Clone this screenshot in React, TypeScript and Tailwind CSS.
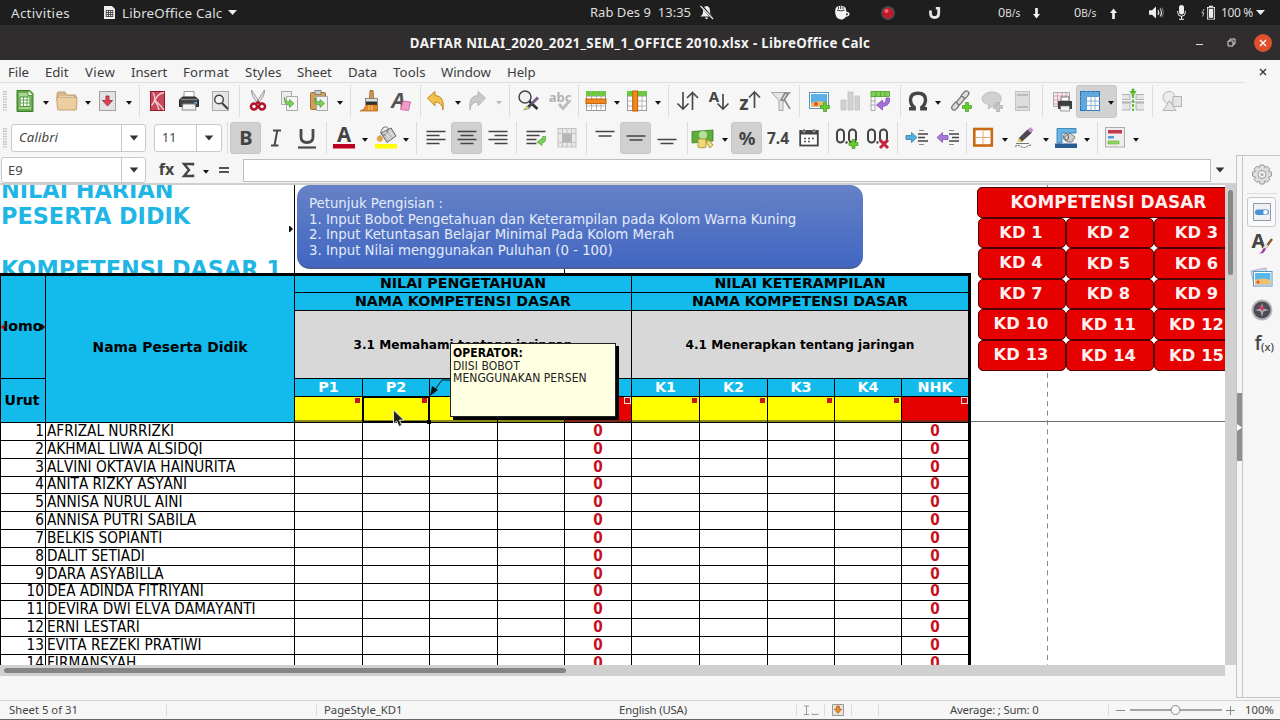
import type { ReactNode } from "react";

type IconProps = { m?: string; children: ReactNode };

const Icon = ({ m = "", children }: IconProps) => (
  <svg className={`h-[22px] w-[22px] shrink-0 overflow-visible ${m}`} viewBox="0 0 22 22" fill="none">
    {children}
  </svg>
);

const Arrow = ({ m = "", faded = false }: { m?: string; faded?: boolean }) => (
  <svg className={`mt-1 h-[6px] w-[8px] shrink-0 ${m}`} viewBox="0 0 8 6">
    <path d="M1 1h6L4 4.8z" fill={faded ? "#bdbdbd" : "#111"} />
  </svg>
);

const Sep = ({ m }: { m: string }) => <div className={`h-8 w-px shrink-0 bg-[#dcdcdc] ${m}`} />;

const Grip = () => (
  <svg className="ml-[3px] h-[22px] w-1 shrink-0" viewBox="0 0 4 22">
    <path d="M.8 1v20M3 1v20" stroke="#aaa" strokeWidth="1.2" strokeDasharray="1.4 1.2" />
  </svg>
);

const Toggled = ({ m, children }: IconProps) => (
  <div className={`flex h-8 w-[31px] shrink-0 items-center justify-center rounded-[3px] border border-[#c6c6c6] bg-[#d0d0d0] ${m}`}>
    {children}
  </div>
);

const DownBig = ({ m = "" }: { m?: string }) => (
  <svg className={`h-[6px] w-[10px] shrink-0 ${m}`} viewBox="0 0 10 6">
    <path d="M.7.6h8.6L5 5.4z" fill="#333" />
  </svg>
);

const Letter = ({ x, y, s, w = 700, c = "#444", italic = false, anchor = "middle", children }: {
  x: number; y: number; s: number; w?: number; c?: string; italic?: boolean;
  anchor?: "start" | "middle"; children: ReactNode;
}) => (
  <text
    x={x} y={y} fontSize={s} fontWeight={w} fill={c} textAnchor={anchor}
    fontStyle={italic ? "italic" : "normal"}
    className="font-['Noto_Sans',sans-serif]"
  >
    {children}
  </text>
);

const Gridlet = ({ band }: { band: "row" | "col" }) => (
  <>
    <rect x="1.5" y="1.5" width="19" height="19" fill="#fff" stroke="#9a9a9a" />
    <rect x="1" y="1" width="20" height="5" fill="#66cc33" />
    <path d="M6.5 1v20M11.5 1v20M16 1v20M1 6.3h20M1 11h20M1 16h20" stroke="#a5a5a5" strokeWidth=".8" />
    {band === "row" ? (
      <rect x="1" y="9" width="20" height="4.6" fill="#ee8a22" stroke="#c65f00" />
    ) : (
      <rect x="6.8" y="1" width="4.8" height="20" fill="#ee8a22" stroke="#c65f00" />
    )}
  </>
);

const Plus = ({ x, y, c = "#66cc33" }: { x: number; y: number; c?: string }) => (
  <path
    d={`M${x - 1.5} ${y - 4.5}h3v3h3v3h-3v3h-3v-3h-3v-3h3z`}
    fill={c} stroke={c === "#66cc33" ? "#3f9a18" : "#aaa"} strokeWidth=".7"
  />
);

function TopBar() {
  return (
    <div className="flex h-[25px] shrink-0 items-center bg-[#1e1e1e] text-[13.400px] text-[#dedede]">
      <div className="w-[92px] pl-[11px] pt-px tracking-[0.320px]">Activities</div>
      <div className="flex w-[497px] items-center">
        <svg className="ml-3 h-[13px] w-[11px]" viewBox="0 0 11 13">
          <path d="M0 0h8l3 3v10H0z" fill="#eee" />
          <path d="M2 4.5h7M2 6.5h7M2 8.5h7M2 10.500h7M2.300 4v7M4.500 4v7M6.600 4v7M8.800 4v7" stroke="#333" strokeWidth=".8" />
        </svg>
        <span className="ml-[7px] w-[101px] whitespace-nowrap pt-px tracking-[0.150px]">LibreOffice Calc</span>
        <svg className="ml-[5px] h-[5px] w-[9px]" viewBox="0 0 9 5"><path d="M0 0h9L4.500 5z" fill="#eee" /></svg>
      </div>
      <div className="flex w-[245px] items-center">
        <span className="w-[110px] whitespace-pre pl-px pt-px text-[13px] tracking-[0.030px]">Rab Des 9  13:35</span>
        <svg className="h-[15px] w-[15px]" viewBox="0 0 15 15">
          <path d="M7.500 1C4.500 1.500 4 4 4 6.500S3 10 1.500 11.500h12C12 10 11 9 11 6.500S10.500 1.500 7.500 1zM6 12.500a1.500 1.500 0 0 0 3 0z" fill="#eee" />
          <path d="M2 .5 14 14" stroke="#1e1e1e" strokeWidth="2.600" />
          <path d="M1.500 1 14 14" stroke="#eee" strokeWidth="1.200" />
        </svg>
      </div>
      <svg className="h-[15px] w-[16px]" viewBox="0 0 16 15">
        <path d="M1 5.500h11.500V7q3-.5 3 1.700 0 2.800-3.700 3-1.300 2.800-5 2.800Q1 14 1 5.500z" fill="#f5f5f5" />
        <path d="M12.300 8.200q1.700-.3 1.700.7 0 1.200-1.900 1.500z" fill="#1e1e1e" />
        <ellipse cx="6.700" cy="4.500" rx="5.300" ry="3.800" fill="#f5f5f5" />
        <path d="M3 5q3.700 1.800 7.500 0M4.500 1.500v2.500M6.700 1v3M9 1.500v2.500" stroke="#1e1e1e" strokeWidth=".9" fill="none" />
      </svg>
      <svg className="ml-[30px] h-4 w-4" viewBox="0 0 16 16">
        <circle cx="8" cy="8" r="7" fill="#4b4b4b" /><circle cx="8" cy="8" r="5.300" fill="#c9152b" />
        <circle cx="6.500" cy="6" r="2" fill="#ee6a78" />
      </svg>
      <svg className="ml-[32px] h-[14px] w-[14px]" viewBox="0 0 14 14">
        <path d="M2.500 4.500v3q.3 4 4 4 4.200 0 4.200-4.500V3" fill="none" stroke="#e6e6e6" strokeWidth="2.800" /><path d="M7.800 1h4.300v2.500H7.800z" fill="#e6e6e6" />
      </svg>
      <span className="ml-[56px] w-[34px] whitespace-nowrap pt-0.5 text-[12.600px]">0<span className="text-[10px]">B/s</span></span>
      <svg className="mt-0.5 h-[11px] w-[9px]" viewBox="0 0 9 11"><path d="M3.200 0h2.600v6H8L4.500 10.500 1 6h2.200z" fill="#f5f5f5" /></svg>
      <span className="ml-[33px] w-[34px] whitespace-nowrap pt-0.5 text-[12.600px]">0<span className="text-[10px]">B/s</span></span>
      <svg className="ml-[1px] mt-0.5 h-[11px] w-[9px]" viewBox="0 0 9 11"><path d="M3.200 11h2.600V5H8L4.500.5 1 5h2.200z" fill="#f5f5f5" /></svg>
      <svg className="ml-[31px] h-[13px] w-[15px]" viewBox="0 0 15 13">
        <path d="M0 4.200h3L7 .5v12L3 8.800H0z" fill="#eee" />
        <path d="M9 4q1.500 2.500 0 5M11 2.500q3 4 0 8" stroke="#ddd" fill="none" strokeWidth="1.200" />
        <path d="M13 1.500q3 5 0 10" stroke="#777" fill="none" />
      </svg>
      <svg className="ml-[13px] h-[15px] w-[9px]" viewBox="0 0 9 15">
        <rect x="2" y="0" width="5" height="9.500" rx="2.500" fill="#eee" />
        <path d="M.7 6v1.500a3.800 3.800 0 0 0 7.600 0V6M4.500 11v3M2 14.300h5" stroke="#eee" fill="none" />
      </svg>
      <svg className="ml-[15px] h-[15px] w-[15px]" viewBox="0 0 15 15">
        <path d="M3 4 1 8h2L1.500 11.500" stroke="#bbb" fill="none" />
        <path d="M6 2h2V.7h4V2h2v12.500H6z" fill="#eee" /><path d="M7.300 3.300h5.400v10H7.300z" fill="none" stroke="#1e1e1e" />
      </svg>
      <span className="ml-[5px] w-[35px] whitespace-nowrap pt-px text-[12px] tracking-[-0.350px]">100 %</span>
      <svg className="h-[5px] w-[9px]" viewBox="0 0 9 5"><path d="M0 0h9L4.500 5z" fill="#eee" /></svg>
    </div>
  );
}

function TitleBar() {
  return (
    <div className="grid h-[35px] shrink-0 grid-cols-[90px_1100px_90px] items-center bg-[#302d2e]">
      <div />
      <div className="pt-0.5 text-center text-[13.300px] font-bold tracking-[0.320px] text-[#f3f3f3]">
        DAFTAR NILAI_2020_2021_SEM_1_OFFICE 2010.xlsx - LibreOffice Calc
      </div>
      <div className="flex items-center">
        <div className="ml-[6px] mt-1 h-px w-[7px] bg-[#ddd]" />
        <svg className="ml-[24px] h-[9px] w-[9px]" viewBox="0 0 9 9">
          <path d="M1 3h5v5H1zM3 3V1h5v5H6" fill="none" stroke="#ddd" />
        </svg>
        <svg className="ml-[18px] h-[18px] w-[18px]" viewBox="0 0 18 18">
          <circle cx="9" cy="9" r="9" fill="#e0502a" /><path d="m6 6 6 6M12 6l-6 6" stroke="#fff" strokeWidth="1.400" />
        </svg>
      </div>
    </div>
  );
}

function MenuBar() {
  return (
    <div className="flex h-[23px] shrink-0 items-center">
      <div className="flex h-full w-[1245px] items-center border-b border-[#e0e0e0] pl-[8px] pt-[3px] text-[13.200px] tracking-[-0.050px] text-[#3c3c3c]">
        <span className="w-[37px]">File</span>
        <span className="w-[40px]">Edit</span>
        <span className="w-[46px] tracking-[0.300px]">View</span>
        <span className="w-[52px]">Insert</span>
        <span className="w-[62px] tracking-[0.200px]">Format</span>
        <span className="w-[52px] tracking-[0.150px]">Styles</span>
        <span className="w-[51px]">Sheet</span>
        <span className="w-[45px]">Data</span>
        <span className="w-[48px] tracking-[0.150px]">Tools</span>
        <span className="w-[66px]">Window</span>
        <span>Help</span>
      </div>
      <svg className="ml-[14px] h-[8px] w-[8px]" viewBox="0 0 8 8"><path d="m1 1 6 6M7 1 1 7" stroke="#333" strokeWidth="1.300" /></svg>
    </div>
  );
}

function StandardToolbar() {
  return (
    <div className="flex h-[37px] shrink-0 items-center pb-px">
      <Grip />
      <Icon m="ml-[7px]">
        <path d="M3 .5h13l3 3v18H3z" fill="#66aa4c" stroke="#3d7d2c" /><path d="M5 3h12v16H5z" fill="#a9d695" />
        <rect x="6" y="7" width="10" height="9.500" fill="#fff" stroke="#4b9433" /><path d="M6 10h10M6 13h10M9.500 7v9.500M13 7v9.500" stroke="#4b9433" strokeWidth=".8" />
        <path d="M14 .5v5h5" fill="#e9f6e4" stroke="#3d7d2c" strokeWidth=".7" />
      </Icon>
      <Arrow m="ml-[6px]" />
      <Icon m="ml-[6px]">
        <path d="M1 4q0-2 2-2h6l2 3h8q1 0 1 1v4H1z" fill="#d8b98c" stroke="#b6935f" strokeWidth=".8" />
        <path d="M3 6h15v5H3z" fill="#fafafa" /><path d="M.7 8q0-1 1-1H20q1 0 1 1l-.5 11q0 1-1 1H2.500q-1 0-1-1z" fill="#ecce9f" stroke="#b6935f" strokeWidth=".8" />
      </Icon>
      <Arrow m="ml-[6px]" />
      <Icon m="ml-[5px]">
        <rect x="2.500" y="1.500" width="16" height="19" fill="#e3e3e3" stroke="#a2a2a2" />
        <path d="M9 6h3v4.500h3.500L10.500 16l-5-5.500H9z" fill="#dd4455" stroke="#a21e30" strokeWidth=".8" />
      </Icon>
      <Arrow m="ml-[6px]" />
      <Sep m="ml-[6px]" />
      <Icon m="ml-[7px]">
        <rect x="3.500" y="1.500" width="14" height="19" fill="#c9495c" stroke="#96172c" />
        <path d="M17 2.500q-7 1.500-9 8 4 3 9 9.500" stroke="#f3d5d9" strokeWidth="1.300" /><path d="M6 2.500q2.500 4 1.500 8-1 3-3 5" stroke="#f3d5d9" strokeWidth="1.300" /><path d="M8 11q3 4 4 9" stroke="#f3d5d9" strokeWidth="1.300" />
      </Icon>
      <Icon m="ml-[9px]">
        <path d="M6 1.500h10v7H6z" fill="#fff" stroke="#999" /><path d="M1.500 10l3-3h13l3 3v6.500h-19z" fill="#454545" stroke="#222" />
        <path d="M3 9.500h16" stroke="#888" /><path d="M5 14h12l1 6H4z" fill="#f5f5f5" stroke="#888" /><rect x="16.500" y="12" width="2.500" height="1.500" fill="#5bc4e8" />
      </Icon>
      <Icon m="ml-[9px]">
        <rect x="3.500" y="1.500" width="16" height="19" fill="#e6e6e6" stroke="#aaa" />
        <circle cx="10" cy="9.500" r="4.300" fill="#f7f7f7" stroke="#444" strokeWidth="1.400" /><path d="m13 13 6 6" stroke="#444" strokeWidth="2.200" />
      </Icon>
      <Sep m="ml-[8px]" />
      <Icon m="ml-[7px]">
        <path d="M4.500 0q-.5 6 6 13l1.500-1.500zM17.500 0q.5 6-6 13L10 11.500z" fill="#e0e0e0" stroke="#888" strokeWidth=".8" />
        <circle cx="7" cy="16.500" r="3" stroke="#b0112b" strokeWidth="2.500" /><circle cx="15" cy="16.500" r="3" stroke="#b0112b" strokeWidth="2.500" />
        <path d="m9 14 2-2 2 2" stroke="#b0112b" strokeWidth="2" />
      </Icon>
      <Icon m="ml-[9px]">
        <path d="M3.500 1.500h10v13h-10z" fill="#eee" stroke="#a9a9a9" /><path d="M8.500 6.500h11v14h-11z" fill="#f5f5f5" stroke="#a9a9a9" />
        <path d="M6.500 7q0 5 5 5V9.500l4.500 4-4.500 4V15Q5.500 15 6.500 7z" fill="#7bd05c" stroke="#439a25" strokeWidth=".7" />
      </Icon>
      <Icon m="ml-[8px]">
        <rect x="2.500" y="2.500" width="15" height="17" rx="1" fill="#cf9f60" stroke="#9d7030" /><rect x="7" y=".5" width="6" height="4" fill="#ccc" stroke="#777" strokeWidth=".8" />
        <path d="M8.500 6.500h11v14h-11z" fill="#f1f1f1" stroke="#a9a9a9" />
        <path d="M7 8q0 4 5 4V9.500l4.500 4-4.500 4V15Q5.500 15 7 8z" fill="#7bd05c" stroke="#439a25" strokeWidth=".7" />
      </Icon>
      <Arrow m="ml-[6px]" />
      <Sep m="ml-[6px]" />
      <Icon m="ml-[8px]">
        <path d="M11 .5h3l.5 8h-4z" fill="#d59a56" stroke="#8f5c22" strokeWidth=".8" /><rect x="6.500" y="8.500" width="12" height="3" fill="#e0e0e0" stroke="#777" strokeWidth=".8" />
        <path d="M6.500 12h12v3h-12z" fill="#333" /><path d="M7 15h11.500v6H1q5-1 6-6z" fill="#e38a2a" stroke="#a85d10" strokeWidth=".7" /><path d="M10 15v5M13 15v5" stroke="#ffd08a" />
      </Icon>
      <Icon m="ml-[9px]">
        <Letter x={8.5} y={18} s={22} italic c="#555">A</Letter>
        <path d="m13 11 7.500 1-2 8.500-8-1z" fill="#f09ccb" stroke="#c45a97" strokeWidth=".8" />
      </Icon>
      <Sep m="ml-[8px]" />
      <Icon m="ml-[4px]">
        <path d="M2.500 8 10 1.500V5.500q10 0 8 14.500-1-8-8-8v4z" fill="#f3c04c" stroke="#b98319" strokeWidth=".9" />
      </Icon>
      <Arrow m="ml-[7px]" />
      <Icon m="ml-[4px]">
        <path d="M19.500 8 12 1.500V5.500q-10 0-8 14.500 1-8 8-8v4z" fill="#c9c9c9" stroke="#b3b3b3" strokeWidth=".9" />
      </Icon>
      <Arrow m="ml-[7px]" faded />
      <Sep m="ml-[6px]" />
      <Icon m="ml-[8px]">
        <circle cx="7" cy="7" r="6" fill="#f1f1f1" stroke="#444" strokeWidth="1.500" /><path d="m11.500 11.500 8 7.500" stroke="#333" strokeWidth="2.800" />
        <path d="m12 15.500 8-8" stroke="#7b5a8e" strokeWidth="3" /><path d="m9 18 5-4.500" stroke="#444" strokeWidth="3" /><path d="m5.500 20 4-4 2 2.500z" fill="#e6e04a" stroke="#777" strokeWidth=".6" />
      </Icon>
      <Icon m="ml-[9px]">
        <Letter x={11} y={11.5} s={13} c="#b2b2b2">abc</Letter><path d="m10 14 4 4.500 6-7" stroke="#bdbdbd" strokeWidth="3" />
      </Icon>
      <Sep m="ml-[7px]" />
      <Icon m="ml-[6px]"><Gridlet band="row" /></Icon>
      <Arrow m="ml-[6px]" />
      <Icon m="ml-[5px]"><Gridlet band="col" /></Icon>
      <Arrow m="ml-[6px]" />
      <Sep m="ml-[6px]" />
      <Icon m="ml-[8px]">
        <path d="M6 2v17M.5 13.500 6 19l5.500-5.500M15.500 20V2.500M10 8l5.500-5.500L21 8" stroke="#4a4a4a" strokeWidth="1.700" />
      </Icon>
      <Icon m="ml-[9px]">
        <Letter x={6} y={12} s={15}>A</Letter><path d="M15 4v15M9.500 13.500 15 19l5.500-5.500" stroke="#4a4a4a" strokeWidth="1.700" />
      </Icon>
      <Icon m="ml-[9px]">
        <Letter x={5} y={20} s={19}>z</Letter><path d="M15.500 18V2M10 7.500 15.500 2 21 7.500" stroke="#4a4a4a" strokeWidth="1.700" />
      </Icon>
      <Icon m="ml-[9px]">
        <path d="M1.500 2.500h19l-7.500 8v10H9v-10z" fill="#e6e6e6" stroke="#a5a5a5" /><path d="m11 10 4-7 3 .5-4 7zM14 9l6 10" stroke="#8b8b8b" strokeWidth="1.600" />
      </Icon>
      <Sep m="ml-[7px]" />
      <Icon m="ml-[8px]">
        <rect x="1.500" y="2.500" width="19" height="16" fill="#fff" stroke="#5a94c4" /><rect x="3" y="4" width="16" height="13" fill="#59b1e6" /><path d="M3 13q5-3 16-1v5H3z" fill="#edbb66" />
        <circle cx="8" cy="14" r="2" fill="#d9542b" /><Plus x={17} y={17} />
      </Icon>
      <Icon m="ml-[9px]">
        <path d="M2 10h5v10H2zM9 2h5v18H9zM16 6h4.500v14H16z" fill="#d2d2d2" stroke="#c0c0c0" strokeWidth=".8" />
      </Icon>
      <Icon m="ml-[8px]">
        <path d="M2 6h4v14.500H2z" fill="#f7f7f7" stroke="#999" strokeWidth=".8" /><path d="M2 11h4M2 15h4" stroke="#999" strokeWidth=".8" />
        <rect x="2" y="1.500" width="18.500" height="5" fill="#7dcf55" stroke="#4a9e2a" strokeWidth=".8" /><path d="M7 1.500v5M11.500 1.500v5M16 1.500v5" stroke="#4a9e2a" strokeWidth=".8" />
        <path d="M17 8h3.500q1 8-7 8.500V20L7.500 15l6-5v3q4 0 3.500-5z" fill="#a56fd8" stroke="#7a45af" strokeWidth=".7" />
      </Icon>
      <Sep m="ml-[9px]" />
      <Icon m="ml-[6px]">
        <path d="M2 18.700h5.200v-1.300Q3.500 14.500 3.500 9.800 3.500 3.300 11 3.300t7.500 6.500q0 4.700-3.700 7.600v1.300H20" stroke="#444" strokeWidth="3.400" />
      </Icon>
      <Arrow m="ml-[5px]" />
      <Icon m="ml-[8px]">
        <rect x="-4.500" y="-2.500" width="9" height="5" rx="2.500" transform="translate(15 5) rotate(-50)" fill="#ddd" stroke="#777" strokeWidth="1.300" />
        <rect x="-4.500" y="-2.500" width="9" height="5" rx="2.500" transform="translate(5.500 16) rotate(-50)" fill="#ddd" stroke="#777" strokeWidth="1.300" />
        <rect x="-4.500" y="-2.200" width="9" height="4.400" rx="2.200" transform="translate(10.500 10.500) rotate(-50)" fill="#ddd" stroke="#777" strokeWidth="1.300" />
        <Plus x={17} y={17} />
      </Icon>
      <Icon m="ml-[9px]">
        <path d="M11 2c12 0 12 12.500 2 13l-6 4 1-4.500C-3 13 0 2 11 2z" fill="#d0d0d0" stroke="#bebebe" /><Plus x={17} y={17} c="#c5c5c5" />
      </Icon>
      <Icon m="ml-[9px]">
        <rect x="3.500" y="1.500" width="14" height="19" fill="#ddd" stroke="#c4c4c4" /><path d="M5 4h11v2H5zM5 16h11v2H5z" fill="#bbb" />
      </Icon>
      <Sep m="ml-[8px]" />
      <Icon m="ml-[9px]">
        <path d="M1.500 2.500h16v14h-16z" fill="#eee" stroke="#aaa" /><path d="M1 6h17M1 10h17M1 14h17M5.500 2v15M10 2v15M14 2v15" stroke="#d89ba2" strokeWidth=".9" />
        <path d="M9 7h8v4H9z" fill="#fff" stroke="#777" /><path d="M6 11h14v8H6z" fill="#3e3e3e" /><path d="M8.500 16h9v5h-9z" fill="#f3f3f3" stroke="#777" strokeWidth=".7" />
      </Icon>
      <div className="ml-0.5 flex h-[33px] w-[41px] shrink-0 items-center rounded-[3px] border border-[#c6c6c6] bg-[#d2d2d2] pl-0.5">
        <Icon>
          <rect x="1.500" y="1.500" width="19" height="19" fill="#fff" stroke="#2874b5" /><path d="M1.500 1.500h19v5h-13v14h-6z" fill="#5aa9e4" stroke="#2874b5" />
          <path d="M7.500 1v19.500M12 1v20M16 1v20M1 6.500h20M1 11h20M1 15.500h20" stroke="#74a5ce" strokeWidth=".8" />
        </Icon>
        <Arrow m="ml-[6px]" />
      </div>
      <Icon m="ml-[5px]">
        <path d="M0 4.500h8v5H0M0 13h8v7H0M22 4.500h-8v5h8M22 13h-8v7h8" fill="#e5e5e5" stroke="#a5a5a5" strokeWidth=".8" /><path d="M0 12h22" stroke="#999" />
        <path d="M11 5v16" stroke="#5bbb35" strokeWidth="2" strokeDasharray="3 1.500" /><path d="M8 1.500h6L11 6zM10-1h2v3h-2z" fill="#6ccc46" stroke="#3f9a18" strokeWidth=".6" />
      </Icon>
      <Sep m="ml-[8px]" />
      <Icon m="ml-[8px]">
        <circle cx="8" cy="7.500" r="6" fill="#ececec" stroke="#b9b9b9" /><path d="M12 6.500h8.500v10H12z" fill="#e5e5e5" stroke="#b3b3b3" /><path d="m8.500 10.500 6.500 10H2z" fill="#e5e5e5" stroke="#b3b3b3" />
      </Icon>
    </div>
  );
}

function FormatToolbar() {
  return (
    <div className="flex h-[36px] shrink-0 items-center">
      <Grip />
      <div className="ml-1 flex h-7 w-[135px] shrink-0 items-center rounded-[3px] border border-[#c9c9c9] bg-white text-[13.200px] text-[#444]">
        <span className="w-[109px] pl-[7px] italic tracking-[0.100px]">Calibri</span>
        <div className="flex h-full flex-1 items-center justify-center border-l border-[#c9c9c9]"><DownBig /></div>
      </div>
      <div className="ml-2 flex h-7 w-[68px] shrink-0 items-center rounded-[3px] border border-[#c9c9c9] bg-white text-[12.500px] text-[#444]">
        <span className="w-[41px] pl-[7px]">11</span>
        <div className="flex h-full flex-1 items-center justify-center border-l border-[#c9c9c9]"><DownBig /></div>
      </div>
      <Sep m="ml-[5px]" />
      <Toggled m="ml-0.5"><Icon><Letter x={11} y={18} s={20}>B</Letter></Icon></Toggled>
      <Icon m="ml-1"><path d="M8 3.500h8M6 18.500h7.500M12.300 3.500 9.500 18.500" stroke="#4a4a4a" strokeWidth="2" /></Icon>
      <Icon m="ml-[9px]">
        <path d="M5 2v8q0 5.500 6 5.500t6-5.500V2" stroke="#4a4a4a" strokeWidth="2.800" /><path d="M2 20.500h18" stroke="#4a4a4a" strokeWidth="2.200" />
      </Icon>
      <Sep m="ml-2" />
      <Icon m="ml-[6px]"><Letter x={11} y={15} s={20.5}>A</Letter><path d="M0 17h22v4.500H0z" fill="#c00020" /></Icon>
      <Arrow m="ml-[6px]" />
      <Icon m="ml-[6px]">
        <path d="m6 6 10-5 5 8-9 6.500z" fill="#c9c9c9" stroke="#666" /><ellipse cx="9.500" cy="4" rx="3" ry="4.500" stroke="#777" transform="rotate(30 9.500 4)" /><path d="m10 5 5 7M14 3l5 7" stroke="#eee" />
        <path d="M5 8Q-1 11 3.500 14.500 8 16 8 10.500z" fill="#e3a04b" /><path d="M0 17h22v4.500H0z" fill="#ffff00" />
      </Icon>
      <Arrow m="ml-[5px]" />
      <Sep m="ml-[6px]" />
      <Icon m="ml-2"><path d="M1.500 4.500h19M1.500 8.500h13M1.500 12.500h19M1.500 16.500h13" stroke="#444" strokeWidth="1.500" /></Icon>
      <Toggled m="ml-1"><Icon><path d="M1.500 4.500h19M4.500 8.500h13M1.500 12.500h19M4.500 16.500h13" stroke="#444" strokeWidth="1.500" /></Icon></Toggled>
      <Icon m="ml-[5px]"><path d="M1.500 4.500h19M7.500 8.500h13M1.500 12.500h19M7.500 16.500h13" stroke="#444" strokeWidth="1.500" /></Icon>
      <Sep m="ml-[7px]" />
      <Icon m="ml-2">
        <path d="M1.500 4.500h19M1.500 8.500h13M1.500 12.500h10M1.500 16.500h10" stroke="#444" strokeWidth="1.500" />
        <path d="M17.500 9.500h3q1 6-3.500 6.500v2.500L12 15l5-3.500V13q1 0 .5-3.500z" fill="#7bd05c" stroke="#439a25" strokeWidth=".6" />
      </Icon>
      <Icon m="ml-[9px]">
        <rect x="2" y="1.500" width="18" height="18.500" fill="#e8e8e8" stroke="#c2c2c2" /><path d="M2 6.500h18M2 15.500h18M6.500 2v18M11 2v5M11 15v5M15.500 2v18" stroke="#c2c2c2" /><rect x="6.500" y="7" width="9" height="8" fill="#b5b5b5" />
      </Icon>
      <Sep m="ml-2" />
      <Icon m="ml-[7px]"><path d="M1.500 4.500h19M4.500 9h13" stroke="#444" strokeWidth="1.500" /></Icon>
      <Toggled m="ml-1"><Icon><path d="M1.500 9h19M4.500 13h13" stroke="#444" strokeWidth="1.500" /></Icon></Toggled>
      <Icon m="ml-[5px]"><path d="M1.500 12.500h19M4.500 16.500h13" stroke="#444" strokeWidth="1.500" /></Icon>
      <Sep m="ml-[9px]" />
      <Icon m="ml-1">
        <path d="M0 4.500 21 3v11L0 16z" fill="#5fae3c" stroke="#3d7f22" strokeWidth=".8" /><circle cx="11" cy="8" r="4" fill="#b4e29a" />
        <path d="M6 12h8v8q-4 2-8 0z" fill="#edd97a" stroke="#a98e25" strokeWidth=".8" /><path d="m14 15 3-2 4 5-3 3z" fill="#edd97a" stroke="#a98e25" strokeWidth=".8" />
      </Icon>
      <Arrow m="ml-[7px]" />
      <Toggled m="ml-0.5"><Icon><Letter x={11} y={17.5} s={18.5}>%</Letter></Icon></Toggled>
      <Icon m="ml-[5px]"><Letter x={11} y={17} s={15.5}>7.4</Letter></Icon>
      <Icon m="ml-[9px]">
        <rect x="2.200" y="4" width="17.600" height="14.500" fill="#fff" stroke="#444" strokeWidth="1.800" /><path d="M2 3.500h18v4H2z" fill="#444" /><path d="M5 2h2v3H5zM15 2h2v3h-2z" fill="#444" stroke="#f6f6f6" strokeWidth=".5" />
        <path d="M6 11.500h2M10 11.500h2M14 11.500h2M6 14.500h2M10 14.500h2" stroke="#555" strokeWidth="1.500" />
      </Icon>
      <Sep m="ml-2" />
      <Icon m="ml-[7px]">
        <rect x="1" y="2.500" width="7" height="13" rx="3.500" stroke="#444" strokeWidth="2" /><rect x="13" y="2.500" width="7" height="13" rx="3.500" stroke="#444" strokeWidth="2" /><circle cx="10.500" cy="15.500" r="1.200" fill="#444" /><Plus x={17.5} y={17} />
      </Icon>
      <Icon m="ml-[9px]">
        <rect x="1" y="2.500" width="7" height="13" rx="3.500" stroke="#444" strokeWidth="2" /><rect x="13" y="2.500" width="7" height="13" rx="3.500" stroke="#444" strokeWidth="2" /><circle cx="10.500" cy="15.500" r="1.200" fill="#444" /><path d="m13 13 8 8M21 13l-8 8" stroke="#c6243a" strokeWidth="3" />
      </Icon>
      <Sep m="ml-2" />
      <Icon m="ml-2">
        <path d="M13 3.500h5M13 17.500h5" stroke="#888" /><path d="M12 7h10M12 10.500h7M12 14h10" stroke="#444" strokeWidth="1.700" /><path d="M0 8.500h5.500V5.500l5.500 5-5.500 5v-3H0z" fill="#55aee0" stroke="#2376a9" strokeWidth=".7" />
      </Icon>
      <Icon m="ml-[9px]">
        <path d="M12 3.500h5M12 17.500h5" stroke="#888" /><path d="M12 7h10M15 10.500h7M12 14h10" stroke="#444" strokeWidth="1.700" /><path d="M11 8.500H5.500v-3l-5.500 5 5.500 5v-3H11z" fill="#a878da" stroke="#7443a9" strokeWidth=".7" />
      </Icon>
      <Sep m="ml-[7px]" />
      <Icon m="ml-[5px]">
        <rect x="2.300" y="2" width="17.500" height="16.500" fill="#fff" stroke="#c86a14" strokeWidth="2.600" /><path d="M11 4v13M4 10.500h14" stroke="#e6aa70" />
      </Icon>
      <Arrow m="ml-[7px]" />
      <Icon m="ml-1">
        <path d="m6 11.500 9-9 3.500 3-10 9z" fill="#4c4c4c" stroke="#222" strokeWidth=".8" /><path d="m14.500 3 3-3 3 3-2.500 3z" fill="#c78bd0" /><path d="m6 11-1.500 4.500L9 14z" fill="#e7c840" />
        <path d="M3 16.500h13" stroke="#777" /><path d="M2 19.500q3-2 6 0t6 0 5-1" stroke="#555" strokeDasharray="2 1" />
      </Icon>
      <Arrow m="ml-[7px]" />
      <Icon m="ml-[5px]">
        <path d="M2 16V1.500h19V6H7v10z" fill="#68b5e4" stroke="#2a77ab" strokeWidth=".8" /><path d="m9 10 6-4 5 4-3 5h-5z" fill="#ccc" stroke="#666" strokeWidth=".8" /><ellipse cx="11" cy="10" rx="2.500" ry="3.500" stroke="#666" /><path d="M0 16.500h22V21H0z" fill="#275d94" />
      </Icon>
      <Arrow m="ml-[6px]" />
      <Sep m="ml-[6px]" />
      <Icon m="ml-[6px]">
        <rect x="1.500" y=".5" width="19" height="19.500" fill="#eee" stroke="#ababab" /><path d="M4 3h14v3.500H4z" fill="#c3394c" /><path d="M4 9h6v2.500H4z" fill="#4e9cd4" /><path d="M4 14h11v3H4z" fill="#8fdc5f" stroke="#5aa632" strokeWidth=".6" />
      </Icon>
      <Arrow m="ml-[6px]" />
    </div>
  );
}

function FormulaBar() {
  return (
    <div className="flex h-[29px] w-[1236px] items-center border-b-2 border-[#cfcfcf] pt-px">
      <div className="ml-px flex h-[26px] w-[145px] shrink-0 items-center rounded-[3px] border border-[#c9c9c9] bg-white text-[13px] text-[#444]">
        <span className="w-[119px] pl-[6px] pt-0.5">E9</span>
        <div className="flex h-full flex-1 items-center justify-center border-l border-[#c9c9c9]"><DownBig /></div>
      </div>
      <Icon m="ml-[10px]"><Letter x={10.5} y={16} s={16}>fx</Letter></Icon>
      <Icon m="ml-0"><path d="M15 6.500V5H6l5 6-5 6h9v-1.500" stroke="#444" strokeWidth="2.400" /></Icon>
      <Arrow m="ml-[2px]" />
      <Icon m="ml-[4px]"><path d="M5 9h10M5 13h10" stroke="#555" strokeWidth="2" /></Icon>
      <div className="ml-[7px] h-[23px] w-[968px] shrink-0 border border-[#bfbfbf] bg-white" />
      <DownBig m="ml-[4px]" />
    </div>
  );
}

const students = [
  "AFRIZAL NURRIZKI", "AKHMAL LIWA ALSIDQI", "ALVINI OKTAVIA HAINURITA", "ANITA RIZKY ASYANI",
  "ANNISA NURUL AINI", "ANNISA PUTRI SABILA", "BELKIS SOPIANTI", "DALIT SETIADI", "DARA ASYABILLA",
  "DEA ADINDA FITRIYANI", "DEVIRA DWI ELVA DAMAYANTI", "ERNI LESTARI", "EVITA REZEKI PRATIWI", "FIRMANSYAH",
];

const columns = ["P1", "P2", "P3", "P4", "NHP", "K1", "K2", "K3", "K4", "NHK"];

const Marker = ({ outlined }: { outlined: boolean }) => (
  <div className={outlined ? "size-[7px] border border-[#ffd5d5] bg-[#c80a0a]" : "m-px mr-0.5 size-[5px] bg-[#c8141a]"} />
);

function Table() {
  return (
    <div className="relative z-10 w-[971px] border-r-[3px] border-t-[3px] border-black bg-white">
      <div className="grid h-[147px] grid-cols-[46px_249px_68px_67px_68px_67px_67px_68px_68px_67px_67px_66px] grid-rows-[17px_18px_68px_18px_25px] border-b border-black bg-[#12bbec] text-center font-['DejaVu_Sans',sans-serif] text-[14.200px] font-bold leading-none text-black">
        <div className="row-span-3 flex items-center justify-center overflow-hidden border-b border-l border-r border-black pb-0.5 text-[14.200px]">
          <span>Nomor</span>
        </div>
        <div className="row-span-5 flex items-center justify-center border-r border-black pb-0.5 text-[13.900px]">Nama Peserta Didik</div>
        <div className="col-span-5 flex items-center justify-center border-b border-r border-black pb-0.5">NILAI PENGETAHUAN</div>
        <div className="col-span-5 flex items-center justify-center border-b border-black pb-0.5">NILAI KETERAMPILAN</div>
        <div className="col-span-5 flex items-center justify-center border-b border-r border-black">NAMA KOMPETENSI DASAR</div>
        <div className="col-span-5 flex items-center justify-center border-b border-black">NAMA KOMPETENSI DASAR</div>
        <div className="col-span-5 flex items-center justify-center border-b border-r border-black bg-[#d8d8d8] pt-0.5 text-[12.100px]">3.1 Memahami tentang jaringan</div>
        <div className="col-span-5 flex items-center justify-center border-b border-black bg-[#d8d8d8] pt-0.5 text-[12.100px]">4.1 Menerapkan tentang jaringan</div>
        <div className="row-span-2 flex items-center justify-center border-l border-r border-black pb-0.5 pr-0.5 text-[14px]">Urut</div>
        {columns.map((c, i) => (
          <div key={c} className={`flex items-center justify-center border-b border-black text-[14.400px] text-white ${i < 9 ? "border-r" : ""}`}>{c}</div>
        ))}
        {columns.map((c, i) => (
          <div key={c} className={`flex items-start justify-end border-black ${i < 9 ? "border-r" : ""} ${c.startsWith("NH") ? "bg-[#e60000]" : "bg-[#ffff00]"} shadow-[inset_0_-2px_0_0_rgba(60,60,40,0.6)]`}>
            <Marker outlined={c.startsWith("NH")} />
          </div>
        ))}
      </div>
      {students.map((name, i) => (
        <div key={name} className="grid h-[17.830px] grid-cols-[46px_249px_68px_67px_68px_67px_67px_68px_68px_67px_67px_66px] font-['DejaVu_Sans_Condensed','DejaVu_Sans',sans-serif] text-[15.200px] leading-[17px] text-black [font-kerning:none] [font-stretch:condensed]">
          <div className="border-b border-l border-r border-black pr-px text-right">{i + 1}</div>
          <div className="whitespace-nowrap border-b border-r border-black pl-px">{name}</div>
          {columns.map((c, j) => (
            <div key={c} className={`border-b border-black text-center font-bold text-[#c8101c] ${j < 9 ? "border-r" : ""}`}>
              {c.startsWith("NH") ? "0" : ""}
            </div>
          ))}
        </div>
      ))}
    </div>
  );
}

const kdButton = "flex items-center justify-center rounded-[5px] border-[1.500px] border-[#4f0000] bg-[#e60000] tracking-[0.1px]";

function Sheet() {
  return (
    <div className="relative h-[480px] w-[1225px] overflow-hidden bg-white font-['DejaVu_Sans',sans-serif]">
      <div className="flex h-[88px] w-[1225px]">
        <div className="flex w-[295px] flex-col overflow-hidden border-r border-black">
          <div className="-mt-[8px] whitespace-pre-line pl-px text-[22.400px] font-bold leading-[26.200px] text-[#1fb6e6]">
            {"NILAI HARIAN\nPESERTA DIDIK\n\nKOMPETENSI DASAR 1"}
          </div>
        </div>
        <div className="ml-[2px] flex h-[84px] w-[566px] flex-col rounded-[13px] border-b-2 border-[#4a5f94] bg-linear-to-b from-[#6681c6] to-[#4167c2] pl-3 pt-[11px] text-[13.300px] leading-[15.700px] text-[#e4ebfa]">
          <span>Petunjuk Pengisian :</span>
          <span>1. Input Bobot Pengetahuan dan Keterampilan pada Kolom Warna Kuning</span>
          <span>2. Input Ketuntasan Belajar Minimal Pada Kolom Merah</span>
          <span>3. Input Nilai menggunakan Puluhan (0 - 100)</span>
        </div>
      </div>
      <Table />
      <svg className="absolute left-[289px] top-[40px] h-[8px] w-[4px]" viewBox="0 0 4 8"><path d="M0 1h1l3 3-3 3H0z" fill="#111" /></svg>
      <svg className="absolute left-[41px] top-[135px] z-10 h-[14px] w-[4px] bg-[#12bbec]" viewBox="0 0 4 14"><path d="M0 4h1l3 3-3 3H0z" fill="#111" /></svg>
      <svg className="absolute left-px top-[135px] z-10 h-[14px] w-[3px] bg-[#12bbec]" viewBox="0 0 3 14"><path d="M3 4 0 7l3 3z" fill="#c01010" /></svg>
      <div className="absolute left-[970px] top-[236px] h-px w-[255px] bg-[#6e6e6e]" />
      <div className="absolute left-[564px] top-[84px] h-1 w-px bg-black" />
      <svg className="absolute left-[1047px] top-0 h-[480px] w-px" viewBox="0 0 1 480"><path d="M.5 0v480" stroke="#888" strokeDasharray="5 4.400" /></svg>
      <div className="absolute left-[977px] top-[2px] z-10 grid grid-cols-[89px_88px_88px] grid-rows-[31px_30px_31px_30px_31px_31px] text-[16.300px] font-bold leading-none text-[#fff0f0]">
        <div className={`${kdButton} col-span-3 pr-0.5 text-[16.900px]`}>KOMPETENSI DASAR</div>
        {Array.from({ length: 15 }, (_, i) => (
          <div key={i} className={i % 3 === 0 ? `${kdButton} ml-px pr-0.5` : `${kdButton} pr-[3px] pt-px`}>KD {i + 1}</div>
        ))}
      </div>
      <div className="absolute left-[362px] top-[211px] z-20 h-[27px] w-[68px] border-2 border-black">
        <div className="absolute -bottom-[3px] -right-[3px] size-1 bg-black" />
      </div>
      <svg className="absolute left-[428px] top-[192px] z-20 h-[20px] w-[24px]" viewBox="0 0 24 20">
        <path d="M23 3h-9L6 14" fill="none" stroke="#111" /><path d="m2 19 2-10 6 4z" fill="#111" />
      </svg>
      <div className="absolute left-[450px] top-[158px] z-20 h-[74px] w-[166px] border border-[#222] bg-[#ffffe1] pl-[2px] pt-[3px] font-['DejaVu_Sans_Condensed','DejaVu_Sans',sans-serif] text-[12px] leading-[12.700px] tracking-[0.060px] text-[#222] shadow-[3px_3px_0_0_#000] [font-stretch:condensed]">
        <div className="font-bold text-black">OPERATOR:</div>
        <div>DIISI BOBOT</div>
        <div>MENGGUNAKAN PERSEN</div>
      </div>
      <svg className="absolute left-[392px] top-[224px] z-30 h-[19px] w-[13px]" viewBox="0 0 13 19">
        <path d="M1.500 1v14l3.200-3 2.300 5.500 2.700-1.200L7.500 11h4.300z" fill="#222" stroke="#eee" strokeWidth=".9" />
      </svg>
    </div>
  );
}

function Sidebar() {
  return (
    <div className="-mt-px flex h-[543px] w-[38px] shrink-0 flex-col items-center border-b border-l border-t border-[#c4c4c4]">
      <Icon m="mt-[8px]">
        <path d="M9 1h4l.7 2.700 2.300-1.500L18.800 5l-1.400 2.300 3 .7v4l-3 1 1.400 2.500-2.800 2.800-2.300-1.400L13 20H9l-.8-3-2.300 1.400L3 15.500 4.500 13l-3-1V8l3-.7L3 5l2.900-2.800L8.200 3.700z" fill="#ddd" stroke="#999" />
        <circle cx="11" cy="10.500" r="4" fill="#f3f3f3" stroke="#999" /><circle cx="11" cy="10.500" r="1.500" fill="#aaa" />
      </Icon>
      <div className="mt-[7px] h-px w-[30px] bg-[#dcdcdc]" />
      <div className="mt-[3px] flex h-[30px] w-[29px] items-center justify-center rounded-[3px] border border-[#c8c8c8] bg-[#fafafa]">
        <svg className="h-5 w-5" viewBox="0 0 20 20">
          <path d="M1.500 1.500h17v17h-17z" fill="#eef0f3" stroke="#8e9aa6" /><rect x="3" y="7.500" width="14" height="5.500" rx="2.700" fill="#4a90d9" /><circle cx="13.500" cy="10.200" r="2.500" fill="#fff" stroke="#6aa3dd" strokeWidth=".6" />
        </svg>
      </div>
      <Icon m="mt-[6px]">
        <Letter x={7.5} y={15} s={20}>A</Letter><path d="m21 6-6 8" stroke="#8a5b25" strokeWidth="2.500" /><path d="m16 11.500-3 4" stroke="#ddd" strokeWidth="3" /><path d="M15 15q-1 6-7 5.500 3-1 4-5z" fill="#9a3b99" />
      </Icon>
      <Icon m="mt-3">
        <path d="m0 4 15-3 2 14-14 3z" fill="#cfe0ea" stroke="#88a" strokeWidth=".6" /><rect x="2.500" y="4.500" width="18.500" height="14.500" fill="#fff" stroke="#5a94c4" /><rect x="4" y="6" width="15.500" height="11.500" fill="#5bb7ea" /><path d="M4 13q7-3 15.500 0v4.500H4z" fill="#f0c070" /><circle cx="7" cy="15" r="1.500" fill="#d9542b" />
      </Icon>
      <Icon m="mt-[10px]">
        <circle cx="11" cy="11" r="9.500" fill="#4c4c58" stroke="#b5b5b5" strokeWidth="2" /><path d="m11 4 1.500 5.500L18 11l-5.500 1.500L11 18l-1.500-5.500L4 11l5.500-1.500z" fill="#aaa" /><path d="m7 6 7 3-3 3z" fill="#d8335a" />
      </Icon>
      <Icon m="mt-[12px]"><Letter x={3.5} y={17} s={20} w={500} anchor="start">f</Letter><Letter x={10} y={18} s={11} w={500} anchor="start">(x)</Letter></Icon>
    </div>
  );
}

function StatusBar() {
  return (
    <div className="flex h-[20px] shrink-0 items-center border-b border-t border-b-[#666] border-t-[#d2d2d2] text-[11.300px] text-[#444]">
      <span className="w-[166px] pl-[9px]">Sheet 5 of 31</span>
      <div className="h-3 w-px bg-[#dcdcdc]" />
      <div className="ml-[149px] h-3 w-px bg-[#dcdcdc]" />
      <span className="w-[263px] pl-[7px]">PageStyle_KD1</span>
      <span className="w-[216px] pl-[39px] tracking-[-0.150px]">English (USA)</span>
      <div className="h-3 w-px bg-[#dcdcdc]" />
      <svg className="ml-[7px] h-[11px] w-[15px]" viewBox="0 0 15 11"><path d="M0 1h5M2.500 1v8.500M0 9.500h5M8 9.500V8.500M8 9.500h6M14 9.500V8.500" fill="none" stroke="#999" /></svg>
      <div className="ml-[5px] h-3 w-px bg-[#dcdcdc]" />
      <svg className="ml-[7px] h-[12px] w-[12px]" viewBox="0 0 12 12"><path d="M.5.5h11v11H.5z" fill="#e8e3dc" stroke="#9a9a9a" /><path d="M4.500 2h3v3h2.200L6 9.500 2.300 5h2.200z" fill="#e58a2c" stroke="#a55a10" strokeWidth=".6" /></svg>
      <div className="ml-[7px] h-3 w-px bg-[#dcdcdc]" />
      <div className="ml-[26px] h-3 w-px bg-[#dcdcdc]" />
      <span className="w-[229px] pl-[71px] tracking-[-0.180px]">Average: ; Sum: 0</span>
      <div className="h-3 w-px bg-[#dcdcdc]" />
      <div className="ml-[7px] h-px w-[9px] bg-[#888]" />
      <svg className="ml-[5px] h-[12px] w-[92px]" viewBox="0 0 92 12"><path d="M0 6h92" stroke="#888" strokeWidth="1.300" /><circle cx="45.500" cy="6" r="4.500" fill="#f8f8f8" stroke="#888" /></svg>
      <svg className="ml-[4px] h-[9px] w-[9px]" viewBox="0 0 9 9"><path d="M0 4.500h9M4.500 0v9" stroke="#888" /></svg>
      <span className="ml-[10px] whitespace-nowrap">100%</span>
    </div>
  );
}

export default function App() {
  return (
    <div className="flex h-[720px] w-[1280px] flex-col overflow-hidden bg-[#f6f6f6] font-['Noto_Sans',sans-serif]">
      <TopBar />
      <TitleBar />
      <MenuBar />
      <StandardToolbar />
      <FormatToolbar />
      <div className="flex h-[544px] shrink-0">
        <div className="flex w-[1236px] shrink-0 flex-col">
          <FormulaBar />
          <div className="flex h-[480px]">
            <Sheet />
            <div className="w-[11px] bg-[#d0d0d0] pl-[3px] pt-[5px]">
              <div className="h-[85px] w-[5px] rounded-full bg-[#878787]" />
            </div>
          </div>
          <div className="h-[11px] w-[1225px] bg-[#d0d0d0] pl-[4px] pt-[3px]">
            <div className="h-[5px] w-[562px] rounded-full bg-[#858585]" />
          </div>
        </div>
        <div className="-mt-px flex h-[543px] w-[6px] shrink-0 flex-col border-b border-l border-t border-[#c4c4c4]">
          <div className="mt-[237px] flex h-[68px] items-center justify-center bg-[#8f8f8f]">
            <svg className="h-[7px] w-[5px]" viewBox="0 0 5 7"><path d="M0 0v7l5-3.500z" fill="#fff" /></svg>
          </div>
        </div>
        <Sidebar />
      </div>
      <StatusBar />
    </div>
  );
}
